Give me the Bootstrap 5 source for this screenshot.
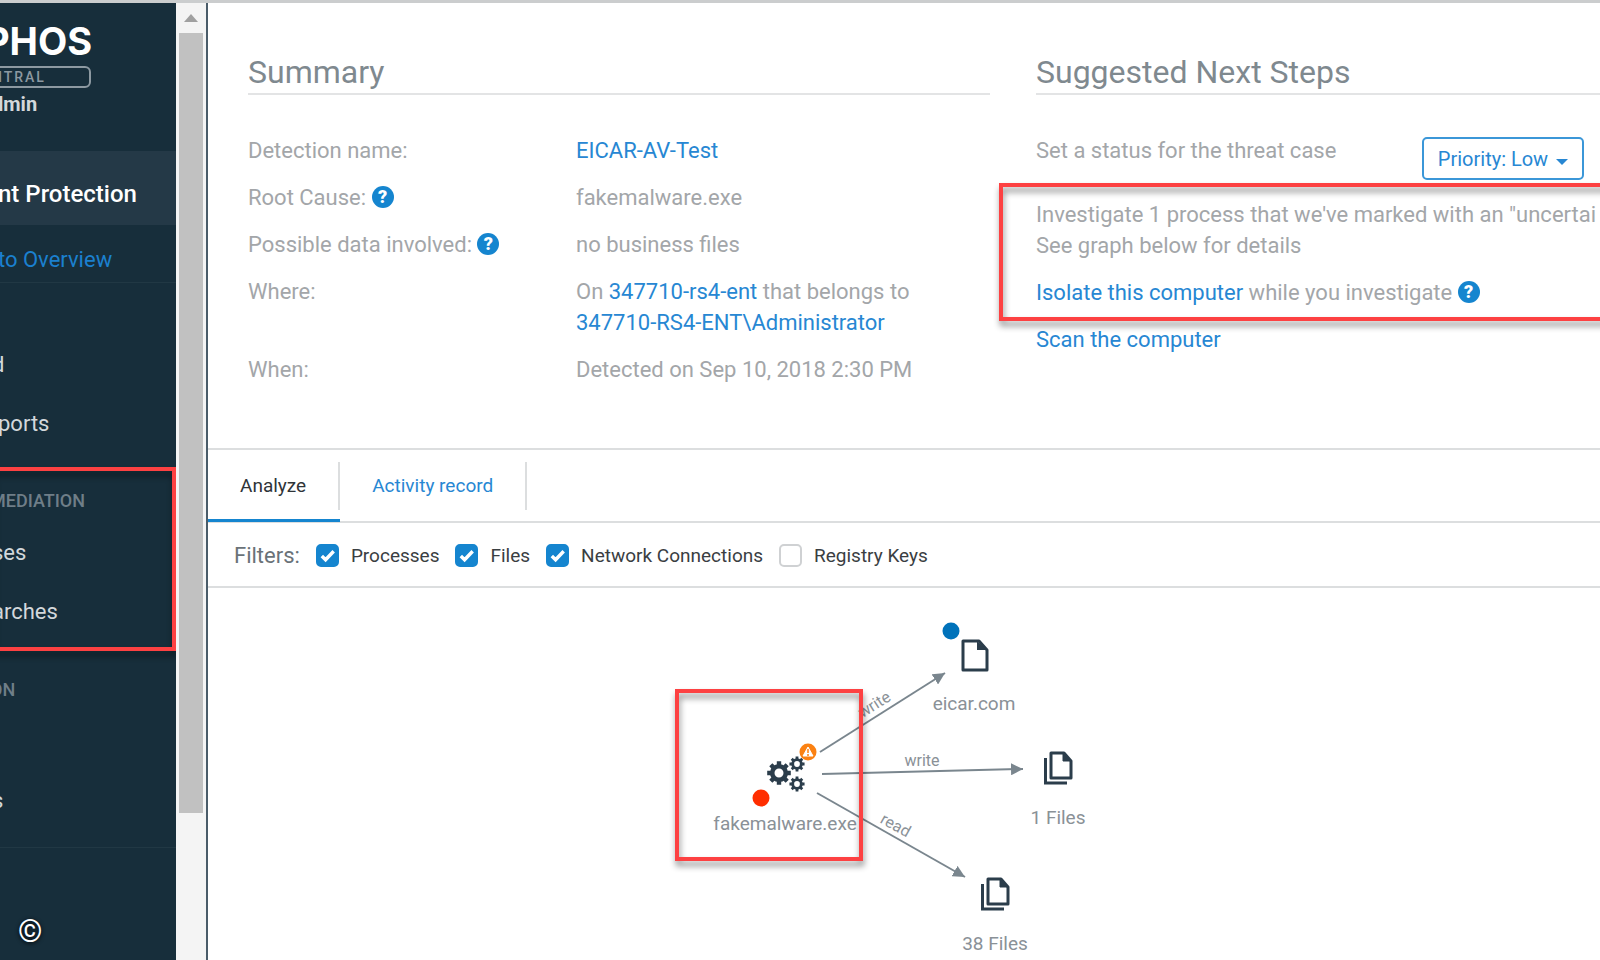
<!DOCTYPE html>
<html lang="en">
<head>
<meta charset="utf-8">
<meta name="viewport" content="width=device-width, initial-scale=1">
<title>Threat case - Summary</title>
<link href="https://cdn.jsdelivr.net/npm/bootstrap@5.3.0/dist/css/bootstrap.min.css" rel="stylesheet">
<style>
  :root { --brand: #1585cf; --navy: #172e3b; --rule: #dcdedf; --mark: #fd4142; }
  body { font-family: Roboto, "Liberation Sans", sans-serif; font-size: 22px; line-height: 31px; color: #a3a6a9; background: #fff; overflow: hidden; }
  a { color: #2787d3; text-decoration: none; }
  .shell { border-top: 3px solid #cbcdce; min-height: 100vh; }

  .side { width: 176px; background: var(--navy); color: #d3d8db; overflow: hidden; flex: none; }
  .side a { color: inherit; display: block; white-space: nowrap; }
  .brand-area { height: 148px; padding-top: 20px; }
  .brand-name { font: 700 38px/36px Inter, sans-serif; color: #fff; margin-left: -15px; }
  .brand-tag { width: 101px; height: 22px; margin: 7px 0 5px -10px; border: 2px solid #8d99a1; border-radius: 6px; font-size: 14px; line-height: 18px; font-weight: 500; letter-spacing: 2px; color: #8d99a1; }
  .brand-role { font-size: 20px; line-height: 22px; font-weight: 700; margin-left: -8px; }
  .side .product { height: 74px; background: #243947; color: #fff; font-size: 24px; font-weight: 500; line-height: 86px; }
  .side .back { height: 58px; line-height: 70px; color: #1b80cf; border-bottom: 1px solid #213844; margin-bottom: 52px; }
  .side .product, .side .back { text-indent: -2px; }
  .side .entry { height: 59px; line-height: 59px; margin-left: -8px; }
  .side .entry.reports { margin-left: -2px; }
  .menu-group { position: relative; padding-top: 21px; }
  .menu-group.framed { height: 184px; margin-top: 14px; }
  .menu-group.ruled { height: 197px; border-bottom: 1px solid #213844; }
  .group-title { font-size: 18px; font-weight: 500; color: #6f7e88; line-height: 26px; margin: 0 0 9px -10px; }
  .menu-group.ruled .group-title { margin-bottom: 68px; padding-top: 5px; }
  .scroller { width: 32px; flex: none; padding: 0 3px; background: #f4f4f4; border-right: 2px solid #4a5c69; }
  .scroller .up { height: 30px; }
  .scroller .thumb { background: #c1c1c1; height: 780px; }

  /* red call-out frames lie over the page */
  .callout { position: absolute; border: 4px solid var(--mark); filter: drop-shadow(1px 5px 3px rgba(0,0,0,.45)); pointer-events: none; z-index: 2; }
  .callout-menu { inset: 0 0 0 -10px; }
  .callout-steps { inset: -16px -40px -13px -37px; }

  .overview { padding: 44px 0 0 40px; height: 445px; }
  .summary { width: 742px; flex: none; }
  .overview h2 { font-size: 32px; line-height: 42px; padding-top: 4px; font-weight: 400; color: #7f898f; border-bottom: 2px solid #e3e4e5; margin: 0 0 40px; }
  .overview p, .overview dt, .overview dd { margin: 0 0 16px; font-weight: 400; }
  .facts { display: grid; grid-template-columns: 328px 1fr; }
  .steps { margin-left: 46px; white-space: nowrap; min-width: 0; }
  .help { width: 22px; height: 22px; padding: 0; border: 0; border-radius: 50%; background: var(--brand); color: #fff; font: 900 18px/22px Roboto, sans-serif; vertical-align: 2px; }
  .status-row { height: 64px; }
  .priority { width: 162px; height: 43px; padding: 0; font-size: 20px; line-height: 30px; color: #2787d3; border: 2px solid #3b97d8; border-radius: 5px; background: #fff; margin: 2px 16px 0 0; }
  .priority::after { border-top-width: 6px; border-left-width: 6px; border-right-width: 6px; margin-left: 8px; vertical-align: 1px; }

  .case-tabs { height: 75px; border-top: 2px solid var(--rule); border-bottom: 2px solid var(--rule); font-size: 19px; }
  .case-tabs a { line-height: 48px; padding: 0 32px; margin-top: 12px; height: 48px; border-right: 2px solid var(--rule); }
  .case-tabs a.active { color: #2f3438; position: relative; }
  .case-tabs a.active::after { content: ""; position: absolute; left: 0; right: -2px; bottom: -12px; height: 3px; background: var(--brand); }
  .filters { height: 65px; padding: 2px 0 0 26px; border-bottom: 2px solid var(--rule); color: #6a7278; }
  .filters .form-check { min-height: 0; margin: 0 0 0 16px; padding: 0; display: flex; align-items: center; gap: 12px; }
  .filters .form-check-label { font-size: 19px; color: #3a3e42; }
  .filters .form-check-input { float: none; margin: 0; width: 23px; height: 23px; border: 2px solid #cfd1d3; border-radius: 5px; }
  .filters .form-check-input:checked { background-color: var(--brand); border-color: var(--brand); background-image: url("data:image/svg+xml,%3Csvg xmlns='http://www.w3.org/2000/svg' viewBox='0 0 20 20'%3E%3Cpath fill='none' stroke='%23fff' stroke-width='3.6' d='M4 10.5l4 4 8.5-9'/%3E%3C/svg%3E"); }

  .graph { position: relative; height: 372px; }
  .graph svg { display: block; width: 100%; height: 100%; }
  .graph .node-name { font-size: 19px; fill: #8a9197; text-anchor: middle; }
  .graph .edge-name { font-size: 16px; fill: #8a9197; text-anchor: middle; }
  .callout-node { left: 467px; top: 101px; width: 188px; height: 172px; }
  .copyright { font-size: 31px; line-height: 36px; color: #fff; text-shadow: 0 1px 4px #000; padding: 66px 0 0 18px; }
</style>
</head>
<body>
<div class="shell d-flex">
  <nav class="side" aria-label="Main menu">
    <div class="brand-area">
      <div class="brand-name">PHOS</div>
      <div class="brand-tag">NTRAL</div>
      <div class="brand-role">dmin</div>
    </div>
    <a class="product" href="#">nt Protection</a>
    <a class="back" href="#">to Overview</a>
    <a class="entry" href="#">d</a>
    <a class="entry reports" href="#">ports</a>
    <div class="menu-group framed">
      <div class="callout callout-menu"></div>
      <div class="group-title">MEDIATION</div>
      <a class="entry" href="#">ses</a>
      <a class="entry" href="#">arches</a>
    </div>
    <div class="menu-group ruled">
      <div class="group-title">ON</div>
      <a class="entry" href="#">s</a>
    </div>
    <div class="copyright">©</div>
  </nav>
  <div class="scroller" aria-hidden="true">
    <div class="up d-flex justify-content-center align-items-center">
      <svg width="14" height="8"><path d="M0 8L7 0l7 8z" fill="#a0a0a0"/></svg>
    </div>
    <div class="thumb"></div>
  </div>

  <main class="flex-grow-1 overflow-hidden">
    <section class="overview d-flex">
      <div class="summary">
        <h2>Summary</h2>
        <dl class="facts m-0">
          <dt>Detection name:</dt><dd><a href="#">EICAR-AV-Test</a></dd>
          <dt>Root Cause: <button class="help" type="button">?</button></dt><dd>fakemalware.exe</dd>
          <dt>Possible data involved: <button class="help" type="button">?</button></dt><dd>no business files</dd>
          <dt>Where:</dt><dd>On <a href="#">347710-rs4-ent</a> that belongs to<br><a href="#">347710-RS4-ENT\Administrator</a></dd>
          <dt>When:</dt><dd>Detected on Sep 10, 2018 2:30 PM</dd>
        </dl>
      </div>
      <div class="steps flex-grow-1">
        <h2>Suggested Next Steps</h2>
        <div class="status-row d-flex justify-content-between align-items-start">
          <span>Set a status for the threat case</span>
          <button class="btn dropdown-toggle priority" type="button">Priority: Low</button>
        </div>
        <div class="position-relative">
          <p>Investigate 1 process that we've marked with an "uncertai<br>See graph below for details</p>
          <p><a href="#">Isolate this computer</a> while you investigate <button class="help" type="button">?</button></p>
          <div class="callout callout-steps"></div>
        </div>
        <p><a href="#">Scan the computer</a></p>
      </div>
    </section>

    <div class="case-tabs d-flex">
      <a class="active" href="#">Analyze</a>
      <a href="#">Activity record</a>
    </div>

    <form class="filters d-flex align-items-center">
      <span>Filters:</span>
      <div class="form-check"><input class="form-check-input" type="checkbox" id="f1" checked><label class="form-check-label" for="f1">Processes</label></div>
      <div class="form-check"><input class="form-check-input" type="checkbox" id="f2" checked><label class="form-check-label" for="f2">Files</label></div>
      <div class="form-check"><input class="form-check-input" type="checkbox" id="f3" checked><label class="form-check-label" for="f3">Network Connections</label></div>
      <div class="form-check"><input class="form-check-input" type="checkbox" id="f4"><label class="form-check-label" for="f4">Registry Keys</label></div>
    </form>

    <section class="graph">
      <svg>
        <defs>
          <marker id="tip" markerUnits="userSpaceOnUse" markerWidth="13" markerHeight="12" refX="12" refY="6" orient="auto"><path d="M0 0l12 6-12 6z" fill="#7a868e"/></marker>
          <g id="gear">
            <circle r="6.8" fill="none" stroke="#2b3d4b" stroke-width="4.6"/>
            <g stroke="#2b3d4b" stroke-width="4.4">
              <path d="M0-11.8V-8M0 11.8V8M-11.8 0H-8M11.8 0H8M-8.2-8.2l2.6 2.6M8.2 8.2L5.6 5.6M-8.2 8.2l2.6-2.6M8.2-8.2L5.6-5.6"/>
            </g>
          </g>
          <g id="sheet" fill="none" stroke="#2b3d4b" stroke-width="3" stroke-linejoin="round">
            <path d="M2 0H15l7 8V25H2V0z"/><path d="M14 0V8h8z" fill="#2b3d4b" stroke-width="1"/>
          </g>
          <g id="sheets"><use href="#sheet" x="5"/><path d="M1.500 5V30H23" fill="none" stroke="#2b3d4b" stroke-width="3"/></g>
        </defs>
        <g stroke="#7a868e" stroke-width="2">
          <path d="M612 164L737 85" marker-end="url(#tip)"/>
          <path d="M614 186L815 181" marker-end="url(#tip)"/>
          <path d="M609 205L757 289" marker-end="url(#tip)"/>
        </g>
        <text class="edge-name" transform="translate(669 121) rotate(-32)">write</text>
        <text class="edge-name" x="714" y="178">write</text>
        <text class="edge-name" transform="translate(685 242) rotate(29)">read</text>

        <use href="#gear" x="571" y="185"/>
        <use href="#gear" transform="translate(589 176) scale(.64)"/>
        <use href="#gear" transform="translate(589 196) scale(.64)"/>
        <circle cx="600" cy="164" r="8.500" fill="#fb8112"/>
        <path d="M600 159l5 9h-10z" fill="#fff" stroke="#fff" stroke-linejoin="round"/>
        <path d="M600 161v4M600 166v2" stroke="#fb8112" stroke-width="1.500"/>
        <circle cx="553" cy="210" r="8.500" fill="#ff2e00"/>
        <text class="node-name" x="577" y="242">fakemalware.exe</text>

        <circle cx="743" cy="43" r="8.500" fill="#0072ba"/>
        <path d="M755 53H771l8 9V82H755z" fill="none" stroke="#2b3d4b" stroke-width="3" stroke-linejoin="round"/>
        <path d="M769 53V62h10z" fill="#2b3d4b"/>
        <text class="node-name" x="766" y="122">eicar.com</text>

        <use href="#sheets" x="836" y="165"/>
        <text class="node-name" x="850" y="236">1 Files</text>
        <use href="#sheets" x="773" y="291"/>
        <text class="node-name" x="787" y="362">38 Files</text>
      </svg>
      <div class="callout callout-node"></div>
    </section>
  </main>
</div>
<script src="https://cdn.jsdelivr.net/npm/bootstrap@5.3.0/dist/js/bootstrap.bundle.min.js"></script>
</body>
</html>
